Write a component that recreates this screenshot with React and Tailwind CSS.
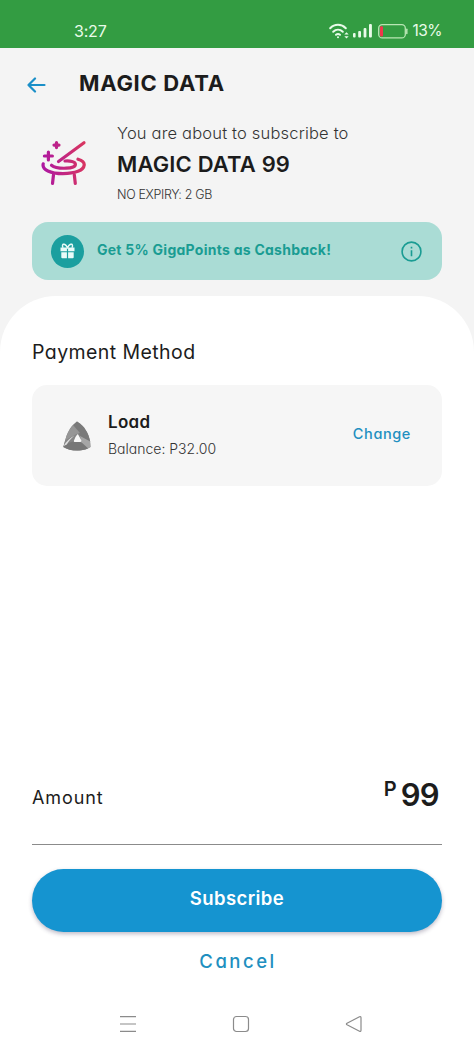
import { useState } from "react";

// phone status bar with wifi, signal and battery
function StatusBar() {
  return (
    <div className="h-12 shrink-0 bg-[#339c42] flex items-start justify-between pl-[74px] pr-8 pt-[21px] text-[#e9fbe9]">
      <span className="text-[16px] leading-5 font-normal tracking-[-0.2px]">3:27</span>
      <div className="flex items-center h-5">
        <svg className="w-5 h-4 mr-[4px]" viewBox="0 0 20 16" fill="none" stroke="currentColor" strokeWidth="2" strokeLinecap="round">
          <path d="M1.200 5.200C5.500.600 12.500.600 16.800 5.200" />
          <path d="M4.200 8.700c2.800-2.700 6.800-2.700 9.600 0" />
          <path d="M7 11.800c1.300-1.100 2.700-1.100 4 0" />
          <circle cx="9" cy="14.200" r="1" fill="currentColor" stroke="none" />
          <path d="M15.300 11.500l2.200-2.300 2.200 2.300zM15.300 13.200l2.200 2.300 2.200-2.300z" fill="currentColor" stroke="none" />
        </svg>
        <svg className="w-[19px] h-[14px] mr-[6px]" viewBox="0 0 19 14" fill="currentColor">
          <rect x="0" y="9" width="2.600" height="4.500" rx="1" />
          <rect x="5.200" y="7" width="2.800" height="6.500" rx="1" />
          <rect x="10.600" y="4" width="2.800" height="9.500" rx="1" />
          <rect x="16" y="0" width="2.900" height="13.500" rx="1" />
        </svg>
        <svg className="w-[30px] h-[15px] mr-1" viewBox="0 0 30 15" fill="none">
          <rect x="0.700" y="0.700" width="26.600" height="13.200" rx="3.500" stroke="#b9e6b4" strokeWidth="1.300" />
          <rect x="2" y="2.200" width="3" height="10.200" rx="1" fill="#f0364a" />
          <path d="M28.800 5.200v4.300" stroke="#b9e6b4" strokeWidth="1.500" strokeLinecap="round" />
        </svg>
        <span className="text-[15.500px] leading-5 font-normal tracking-[-0.5px]">13%</span>
      </div>
    </div>
  );
}

function MagicIcon() {
  return (
    <svg className="w-[46px] h-[46px]" viewBox="0 0 46 46" fill="none" stroke="url(#magic)" strokeWidth="3.200" strokeLinecap="round" strokeLinejoin="round">
      <defs>
        <linearGradient id="magic" gradientUnits="userSpaceOnUse" x1="2" y1="24" x2="45" y2="20">
          <stop offset="0" stopColor="#ae18a0" />
          <stop offset="1" stopColor="#d9365f" />
        </linearGradient>
      </defs>
      <path d="M17.500 21.500L43 2.800" />
      <path d="M15.500 2.600v5M13 5.100h5" />
      <path d="M7.400 12v8M3.400 16h8" />
      <path d="M2.200 23.800c-1.500 6 7.500 9.800 19.800 9.800 12.200 0 20.700-3.200 21.200-8.600.3-3-2.200-4.600-6.200-5.800" />
      <path d="M10.500 25.200c3 2.600 8.500 3.200 14.500 3 6.500-.2 9.500-1.800 9.400-4-.2-2.700-5.500-3.600-10.400-3.200" />
      <path d="M12.500 34.800L11.500 43.500M33.300 34.800L34.300 43.500" />
    </svg>
  );
}

function LoadIcon() {
  return (
    <svg className="w-7 h-[30px]" viewBox="0 0 28 30">
      <path d="M14 .5C9 4 5 9.500 2.800 17L.3 26c3.700 2.500 8.500 3.400 14 3.400 5.700 0 10.200-1 13.200-3.400C27.200 14 22 5 14 .5z" fill="#858585" />
      <path d="M14 .5L10 4.500 17.500 15.500l9.800 5.500C25.500 12 21 4.500 14 .5z" fill="#7a7a7a" />
      <path d="M10 4C6 8.500 3.500 14 2.200 19.500L14 13l3-1z" fill="#969696" />
      <path d="M.3 26L2.200 19.500 13.500 13 10.500 21z" fill="#868686" />
      <path d="M.3 26c3-3 6.500-5 10-5.500l8.200.8L25 27.500C18 30.500 7 30.500.3 26z" fill="#777" />
      <path d="M17 15l10.200 5.500.3 5.500-2.500 1.300-6.500-6z" fill="#a6a6a6" />
      <path d="M.6 25c2.600-4.500 6.400-8 10.900-10.500-3.500 3-6 6-7.700 9z" fill="#dedede" />
      <path d="M14.200 13.500q.7-.5 1.200.4l3 5.600q.4 1.300-.9 1.400l-5.800.2q-1.200-.1-.8-1.300.9-3.600 3.300-6.300z" fill="#f7f7f7" />
    </svg>
  );
}

function CashbackBanner() {
  return (
    <div className="mt-[14px] mx-8 h-[58px] shrink-0 rounded-[16px] bg-[#aadcd5] flex items-center pl-[19px] pr-5 text-[#1a9c93]">
      <div className="w-[33px] h-[33px] rounded-full bg-[#1b9f9f] flex items-center justify-center">
        <svg className="w-[15px] h-4" viewBox="0 0 15 16" fill="#e9fbf8">
          <path d="M.5 4.500h6.400v3.700H.5zM8.100 4.500h6.400v3.700H8.100zM1.300 9.300h5.600v6H2.300q-1 0-1-1zM8.100 9.300h5.600v5q0 1-1 1H8.100z" />
          <path d="M7.500 5.500C7 3 5.500 1.300 3.200 1M7.500 5.500C8 3 9.500 1.300 11.800 1M3.200 4.800C2 3.500 2.300 2.200 3.200 1M11.800 4.800C13 3.500 12.700 2.200 11.800 1" fill="none" stroke="#e9fbf8" strokeWidth="1.300" />
        </svg>
      </div>
      <span className="ml-[13px] pb-[3px] text-[14px] leading-5 font-bold tracking-[0.26px] whitespace-nowrap">
        Get 5% GigaPoints as Cashback!
      </span>
      <svg className="ml-auto w-[21px] h-[21px]" viewBox="0 0 21 21" fill="none" stroke="currentColor" strokeWidth="1.600">
        <circle cx="10.500" cy="10.500" r="9.400" />
        <path d="M10.500 9.300v6M10.500 5.700v1.800" />
      </svg>
    </div>
  );
}

function NavBar() {
  return (
    <div className="h-[58px] shrink-0 flex items-center justify-between pl-[119px] pr-[111px] text-[#8b8b8b]">
      <svg className="w-[18px] h-[18px]" viewBox="0 0 18 18" stroke="currentColor" strokeWidth="1.200">
        <path d="M1 1.600h16M1 9h16M1 16.400h16" />
      </svg>
      <svg className="w-[18px] h-[18px]" viewBox="0 0 18 18" fill="none" stroke="currentColor" strokeWidth="1.200">
        <rect x="1.500" y="1.500" width="15" height="15" rx="3" />
      </svg>
      <svg className="w-[18px] h-[18px]" viewBox="0 0 18 18" fill="none" stroke="currentColor" strokeWidth="1.200" strokeLinejoin="round">
        <path d="M2 8.200L14.500 1.700q1.500-.6 1.500 1v12.600q0 1.600-1.500 1L2 9.800q-1.200-.8 0-1.600z" />
      </svg>
    </div>
  );
}

export default function App() {
  const [method] = useState({ name: "Load", balance: "P32.00" });

  return (
    <div className="w-[474px] h-[1053px] overflow-hidden flex flex-col bg-[#f4f4f4] text-[#1c1c1c] font-['Inter',sans-serif] [font-feature-settings:'cv11']">
      <StatusBar />

      <div className="h-[70px] shrink-0 flex items-center">
        <button type="button" aria-label="Back" className="ml-[27px] w-[19px] pt-1">
          <svg className="w-[19px] h-4" viewBox="0 0 19 16" fill="none" stroke="#1a8fc8" strokeWidth="2.200" strokeLinecap="round" strokeLinejoin="round">
            <path d="M17.500 8H1.500M8 1.500L1.500 8l6.500 6.500" />
          </svg>
        </button>
        <h1 className="ml-[33px] text-[22px] leading-7 font-bold tracking-[0.7px] whitespace-nowrap">MAGIC DATA</h1>
      </div>

      <div className="flex shrink-0 pl-[41px]">
        <div className="w-[76px] pt-[22px]">
          <MagicIcon />
        </div>
        <div className="whitespace-nowrap">
          <p className="text-[16.500px] leading-[30px] font-light tracking-[0.180px] text-[#333]">You are about to subscribe to</p>
          <h2 className="text-[22px] leading-[33px] font-semibold tracking-[0.150px]">MAGIC DATA 99</h2>
          <p className="text-[12.500px] leading-[27px] font-light tracking-[-0.350px] text-[#333]">NO EXPIRY: 2 GB</p>
        </div>
      </div>

      <CashbackBanner />

      <main className="mt-4 flex-1 flex flex-col bg-white rounded-t-[56px]">
        <h3 className="mt-[42px] ml-8 text-[19.500px] leading-7 font-normal tracking-[0.420px]">Payment Method</h3>

        <div className="mt-[19px] mx-8 h-[101px] shrink-0 rounded-[15px] bg-[#f6f6f6] flex items-center pl-[31px] pr-8">
          <LoadIcon />
          <div className="ml-[17px] pb-px whitespace-nowrap">
            <p className="text-[17px] leading-[27px] font-semibold tracking-[0.300px]">{method.name}</p>
            <p className="text-[14px] leading-[26px] font-light text-[#333]">Balance: {method.balance}</p>
          </div>
          <button type="button" className="ml-auto -mr-px pb-[3px] text-[14.500px] leading-5 font-medium tracking-[0.600px] text-[#218fc0]">
            Change
          </button>
        </div>

        <div className="mt-auto mx-8 h-[76px] shrink-0 border-b-[1.500px] border-[#8b8b8b] flex items-start justify-between">
          <span className="mt-[13px] text-[18px] leading-8 tracking-[0.900px]">Amount</span>
          <div className="flex items-start font-semibold pr-[3px]">
            <span className="mt-[6px] text-[20px] leading-7">P</span>
            <span className="ml-1 mt-[6px] text-[31px] leading-10 tracking-[-0.700px]">99</span>
          </div>
        </div>

        <button type="button" className="mt-6 mx-8 h-[63px] shrink-0 rounded-full bg-[#1594d0] text-white text-[18.500px] leading-6 font-semibold tracking-[0.400px] pb-[5px] shadow-[0_2px_4px_rgba(40,30,70,0.3)]">
          Subscribe
        </button>
        <button type="button" className="mt-[15px] mb-[20px] mx-auto pl-[2px] text-[18.500px] leading-7 font-medium tracking-[2.500px] text-[#218fc0]">
          Cancel
        </button>
        <NavBar />
      </main>
    </div>
  );
}
